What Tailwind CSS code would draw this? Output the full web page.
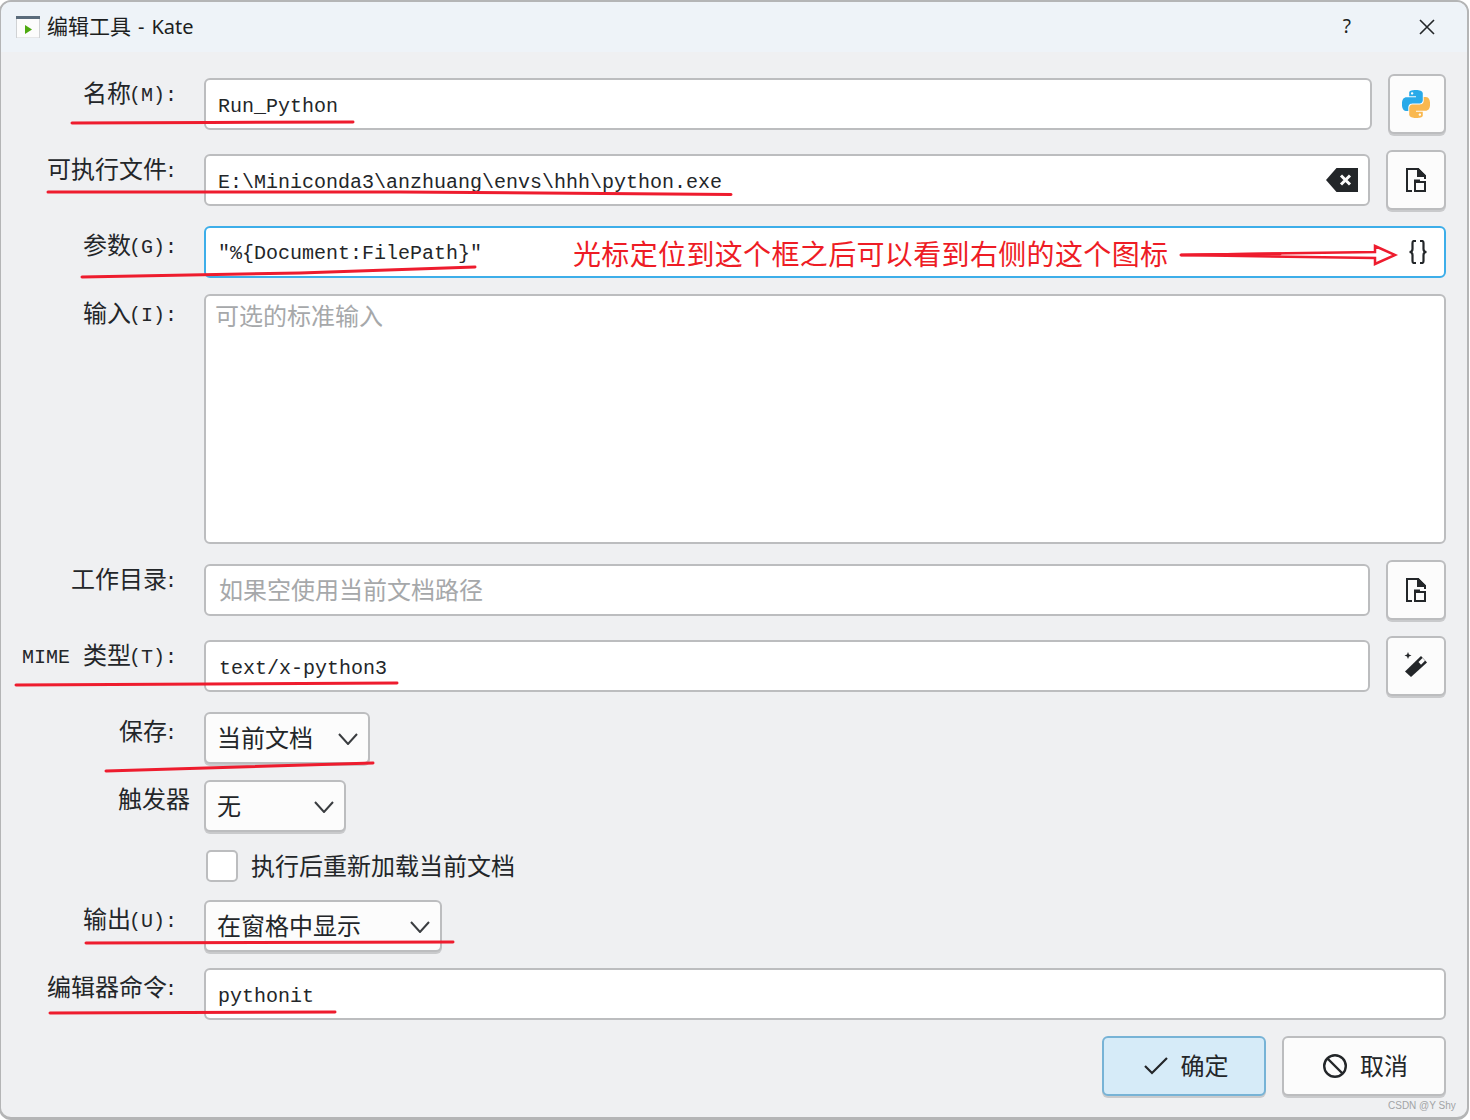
<!DOCTYPE html>
<html lang="zh-CN">

<head>
    <title>编辑工具 - Kate</title>
    <meta charset="utf-8">
    <script src="https://cdn.jsdelivr.net/npm/@tailwindcss/browser@4"></script>
</head>

<body class="bg-white">
    <div class="relative w-[1470px] h-[1120px] overflow-hidden">
        <!-- Window -->
        <div class="w-full h-full flex flex-col rounded-[12px] border-2 border-b-[3px] border-[#b4b5b6] bg-[#eff0f2] text-[#232629] text-[24px] leading-[28px] font-['Liberation_Mono','Noto_Sans_CJK_SC',monospace] overflow-hidden -mx-px">
            <!-- Title bar -->
            <div class="h-[50px] shrink-0 bg-[#eef3f8] flex items-center pl-[15px] pr-[32px] font-['Noto_Sans_CJK_SC',sans-serif] text-[21px] text-[#1c1e20]">
                <svg class="w-[24px] h-[22px] mr-[7px]" viewBox="0 0 24 22">
                    <rect x="0.5" y="2" width="23" height="20" fill="#fcfcfc" stroke="#d0d2d4" />
                    <rect x="0" y="0" width="24" height="3" fill="#5a6b7b" />
                    <path d="M9 9l7 4.500-7 4.500z" fill="#4eaa10" />
                </svg>
                <span class="-mt-[2px]">编辑工具<span class="font-['Noto_Sans',sans-serif] text-[20px] ml-[7px] mr-[7px]">-</span><span class="font-['Noto_Sans',sans-serif] text-[20px]">Kate</span></span>
                <span class="ml-auto mr-[68px] -mt-[2px] font-['Noto_Sans',sans-serif] text-[19px]">?</span>
                <svg class="w-[16px] h-[16px]" viewBox="0 0 16 16" fill="none" stroke="#232629" stroke-width="1.600">
                    <path d="M1 1l14 14M15 1L1 15" />
                </svg>
            </div>

            <!-- Form -->
            <div class="flex-1 flex flex-col gap-[16px] pt-[22px] pr-[21px]">
                <div class="flex">
                    <div class="w-[203px] h-[38px] pt-[6px] shrink-0 flex items-center justify-end pr-[27px]">名称<span class="text-[20px] -ml-[2px]">(M):</span></div>
                    <div class="flex-1 flex items-center gap-[16px]">
                        <div class="flex-1 h-[52px] bg-white border-2 border-[#bcbdbf] rounded-[6px] pl-[12px] flex items-center text-[20px] pt-[6px]">Run_Python</div>
                        <div class="w-[58px] h-[60px] bg-[#fcfcfc] border-2 border-[#bcbdbf] rounded-[6px] shadow-[0_2px_0_#c9cacc] flex items-center justify-center">
                            <svg class="w-[28px] h-[28px] -ml-[2px]" viewBox="0 0 24 24">
                                <path fill="#29aae9" d="M14.25.18l.9.2.73.26.59.3.45.32.34.34.25.34.16.33.1.3.04.26.02.2-.01.13V8.5l-.05.63-.13.55-.21.46-.26.38-.3.31-.33.25-.35.19-.35.14-.33.1-.3.07-.26.04-.21.02H8.77l-.69.05-.59.14-.5.22-.41.27-.33.32-.27.35-.2.36-.15.37-.1.35-.07.32-.04.27-.02.21v3.06H3.17l-.21-.03-.28-.07-.32-.12-.35-.18-.36-.26-.36-.36-.35-.46-.32-.59-.28-.73-.21-.88-.14-1.05-.05-1.23.06-1.22.16-1.04.24-.87.32-.71.36-.57.4-.44.42-.33.42-.24.4-.16.36-.1.32-.05.24-.01h.16l.06.01h8.16v-.83H6.18l-.01-2.75-.02-.37.05-.34.11-.31.17-.28.25-.26.31-.23.38-.2.44-.18.51-.15.58-.12.64-.1.71-.06.77-.04.84-.02 1.27.05zm-6.3 1.98l-.23.33-.08.41.08.41.23.34.33.22.41.09.41-.09.33-.22.23-.34.08-.41-.08-.41-.23-.33-.33-.22-.41-.09-.41.09z" />
                                <path fill="#f9b84f" d="M21.04 6.11l.28.06.32.12.35.18.36.27.36.35.35.47.32.59.28.73.21.88.14 1.04.05 1.23-.06 1.23-.16 1.04-.24.86-.32.71-.36.57-.4.45-.42.33-.42.24-.4.16-.36.09-.32.05-.24.02-.16-.01h-8.22v.82h5.84l.01 2.76.02.36-.05.34-.11.31-.17.29-.25.25-.31.24-.38.2-.44.17-.51.15-.58.13-.64.09-.71.07-.77.04-.84.01-1.27-.04-1.07-.14-.9-.2-.73-.25-.59-.3-.45-.33-.34-.34-.25-.34-.16-.33-.1-.3-.04-.25-.02-.2.01-.13v-5.34l.05-.64.13-.54.21-.46.26-.38.3-.32.33-.24.35-.2.35-.14.33-.1.3-.06.26-.04.21-.02.13-.01h5.84l.69-.05.59-.14.5-.21.41-.28.33-.32.27-.35.2-.36.15-.36.1-.35.07-.32.04-.28.02-.21V6.07h2.09l.14.01zm-6.47 14.25l-.23.33-.08.41.08.41.23.33.33.23.41.08.41-.08.33-.23.23-.33.08-.41-.08-.41-.23-.33-.33-.23-.41-.08-.41.08z" />
                            </svg>
                        </div>
                    </div>
                </div>

                <div class="flex">
                    <div class="w-[203px] h-[38px] pt-[6px] shrink-0 flex items-center justify-end pr-[27px]">可执行文件<span class="text-[20px] -ml-[2px]">:</span></div>
                    <div class="flex-1 flex items-center gap-[16px]">
                        <div class="flex-1 h-[52px] bg-white border-2 border-[#bcbdbf] rounded-[6px] pl-[12px] pr-[10px] flex items-center justify-between text-[20px]">
                            <span class="pt-[6px]">E:\Miniconda3\anzhuang\envs\hhh\python.exe</span>
                            <svg class="w-[32px] h-[24px]" viewBox="0 0 32 24">
                                <path d="M32 0H10.500L0 12l10.500 12H32z" fill="#232629" />
                                <path d="M15 7.500l9 9M24 7.500l-9 9" stroke="#fcfcfc" stroke-width="3" fill="none" />
                            </svg>
                        </div>
                        <div class="w-[60px] h-[60px] bg-[#fcfcfc] border-2 border-[#bcbdbf] rounded-[6px] shadow-[0_2px_0_#c9cacc] flex items-center justify-center">
                            <svg class="w-[20px] h-[24px]" viewBox="0 0 20 24" fill="none" stroke="#232629" stroke-width="2">
                                <path d="M6 23H1V1h11l7 7v3" />
                                <path d="M12 1v7h7z" fill="#232629" />
                                <path d="M9 14h10v9H9z" />
                                <path d="M8 12.500h6" />
                            </svg>
                        </div>
                    </div>
                </div>

                <div class="flex">
                    <div class="w-[203px] h-[38px] pt-[6px] shrink-0 flex items-center justify-end pr-[27px]">参数<span class="text-[20px] -ml-[2px]">(G):</span></div>
                    <div class="flex-1 h-[52px] bg-white border-2 border-[#3daee9] rounded-[6px] pl-[12px] pr-[16px] flex items-center justify-between text-[20px]">
                        <span class="pt-[4px]">"%{Document:FilePath}"</span>
                        <svg class="w-[20px] h-[24px]" viewBox="0 0 20 24" fill="none" stroke="#232629" stroke-width="2.200">
                            <path d="M8 1H6Q4.500 1 4.500 3v6q0 3-3 3 3 0 3 3v6q0 2 1.500 2h2" />
                            <path d="M12 1h2q1.500 0 1.500 2v6q0 3 3 3-3 0-3 3v6q0 2-1.500 2h-2" />
                        </svg>
                    </div>
                </div>

                <div class="flex">
                    <div class="w-[203px] h-[38px] pt-[6px] shrink-0 flex items-center justify-end pr-[27px]">输入<span class="text-[20px] -ml-[2px]">(I):</span></div>
                    <div class="flex-1 h-[250px] bg-white border-2 border-[#bcbdbf] rounded-[6px] pl-[9px] pt-[9px] text-[#a6a8aa]">可选的标准输入</div>
                </div>

                <div class="flex">
                    <div class="w-[203px] h-[38px] pt-[6px] shrink-0 flex items-center justify-end pr-[27px]">工作目录<span class="text-[20px] -ml-[2px]">:</span></div>
                    <div class="flex-1 flex items-center gap-[16px]">
                        <div class="flex-1 h-[52px] bg-white border-2 border-[#bcbdbf] rounded-[6px] pl-[13px] flex items-center text-[#a6a8aa] pt-[6px]">如果空使用当前文档路径</div>
                        <div class="w-[60px] h-[60px] bg-[#fcfcfc] border-2 border-[#bcbdbf] rounded-[6px] shadow-[0_2px_0_#c9cacc] flex items-center justify-center">
                            <svg class="w-[20px] h-[24px]" viewBox="0 0 20 24" fill="none" stroke="#232629" stroke-width="2">
                                <path d="M6 23H1V1h11l7 7v3" />
                                <path d="M12 1v7h7z" fill="#232629" />
                                <path d="M9 14h10v9H9z" />
                                <path d="M8 12.500h6" />
                            </svg>
                        </div>
                    </div>
                </div>

                <div class="flex">
                    <div class="w-[203px] h-[38px] pt-[6px] shrink-0 flex items-center justify-end pr-[27px]"><span class="text-[20px]">MIME</span><span class="w-[13px]"></span>类型<span class="text-[20px] -ml-[2px]">(T):</span></div>
                    <div class="flex-1 flex items-center gap-[16px]">
                        <div class="flex-1 h-[52px] bg-white border-2 border-[#bcbdbf] rounded-[6px] pl-[13px] flex items-center text-[20px] pt-[6px]">text/x-python3</div>
                        <div class="w-[60px] h-[60px] bg-[#fcfcfc] border-2 border-[#bcbdbf] rounded-[6px] shadow-[0_2px_0_#c9cacc] flex items-center justify-center">
                            <svg class="w-[24px] h-[26px] -mt-[5px]" viewBox="0 0 24 26">
                                <path d="M1 20.500L17 5l6 6.500L7 26z" fill="#232629" />
                                <path d="M14.500 11l4-4 2.500 2.800-4 4z" fill="#fcfcfc" />
                                <path d="M4 1l1 2.500L7.500 4.500 5 5.500 4 8 3 5.500.5 4.500 3 3.500z" fill="#232629" />
                            </svg>
                        </div>
                    </div>
                </div>

                <div class="flex">
                    <div class="w-[203px] h-[38px] pt-[6px] shrink-0 flex items-center justify-end pr-[27px]">保存<span class="text-[20px] -ml-[2px]">:</span></div>
                    <div class="w-[166px] h-[52px] bg-[#fcfcfc] border-2 border-[#bcbdbf] rounded-[6px] shadow-[0_2px_0_#c9cacc] pl-[11px] pr-[10px] flex items-center justify-between">
                        <span class="pt-[6px]">当前文档</span>
                        <svg class="w-[20px] h-[12px] mt-[2px]" viewBox="0 0 20 12" fill="none" stroke="#3a3d40" stroke-width="2"><path d="M1 1l9 10 9-10" /></svg>
                    </div>
                </div>

                <div class="flex">
                    <div class="w-[203px] h-[38px] pt-[6px] shrink-0 flex items-center justify-end pr-[14px]">触发器</div>
                    <div class="w-[142px] h-[52px] bg-[#fcfcfc] border-2 border-[#bcbdbf] rounded-[6px] shadow-[0_2px_0_#c9cacc] pl-[11px] pr-[10px] flex items-center justify-between">
                        <span class="pt-[6px]">无</span>
                        <svg class="w-[20px] h-[12px] mt-[2px]" viewBox="0 0 20 12" fill="none" stroke="#3a3d40" stroke-width="2"><path d="M1 1l9 10 9-10" /></svg>
                    </div>
                </div>

                <div class="flex items-center h-[36px] pl-[205px]">
                    <div class="w-[32px] h-[32px] bg-white border-2 border-[#bcbdbf] rounded-[5px] mr-[13px]"></div>
                    <span class="pt-[6px]">执行后重新加载当前文档</span>
                </div>

                <div class="flex">
                    <div class="w-[203px] h-[38px] pt-[6px] shrink-0 flex items-center justify-end pr-[27px]">输出<span class="text-[20px] -ml-[2px]">(U):</span></div>
                    <div class="w-[238px] h-[52px] bg-[#fcfcfc] border-2 border-[#bcbdbf] rounded-[6px] shadow-[0_2px_0_#c9cacc] pl-[11px] pr-[10px] flex items-center justify-between">
                        <span class="pt-[6px]">在窗格中显示</span>
                        <svg class="w-[20px] h-[12px] mt-[2px]" viewBox="0 0 20 12" fill="none" stroke="#3a3d40" stroke-width="2"><path d="M1 1l9 10 9-10" /></svg>
                    </div>
                </div>

                <div class="flex">
                    <div class="w-[203px] h-[38px] pt-[6px] shrink-0 flex items-center justify-end pr-[27px]">编辑器命令<span class="text-[20px] -ml-[2px]">:</span></div>
                    <div class="flex-1 h-[52px] bg-white border-2 border-[#bcbdbf] rounded-[6px] pl-[12px] flex items-center text-[20px] pt-[6px]">pythonit</div>
                </div>

                <!-- Buttons -->
                <div class="flex justify-end gap-[16px]">
                    <div class="w-[164px] h-[60px] bg-[#d6ebf8] border-2 border-[#77b3d6] rounded-[6px] shadow-[0_2px_0_#c9cacc] flex items-center justify-center gap-[13px] pl-[4px]">
                        <svg class="w-[24px] h-[18px]" viewBox="0 0 24 18" fill="none" stroke="#232629" stroke-width="2.200"><path d="M1 9l7 7L23 1" /></svg>
                        <span class="pt-[6px]">确定</span>
                    </div>
                    <div class="w-[164px] h-[60px] bg-[#fcfcfc] border-2 border-[#bcbdbf] rounded-[6px] shadow-[0_2px_0_#c9cacc] flex items-center justify-center gap-[13px] pl-[3px]">
                        <svg class="w-[24px] h-[24px]" viewBox="0 0 24 24" fill="none" stroke="#232629" stroke-width="2.400"><circle cx="12" cy="12" r="10.800" /><path d="M4.500 4.500l15 15" /></svg>
                        <span class="pt-[6px]">取消</span>
                    </div>
                </div>
            </div>
        </div>

        <!-- Red annotations on top of the dialog -->
        <svg class="absolute left-0 top-0 w-[1470px] h-[1120px] pointer-events-none" viewBox="0 0 1470 1120" fill="none" stroke="#ee1c2e" stroke-width="3" stroke-linecap="round">
            <path d="M72 123L210 122.500 353 122" />
            <path d="M48 192L400 192 731 194.500" />
            <path d="M82 277L300 273 475 267" />
            <path d="M16 685L397 683" />
            <path d="M106 771L373 763" />
            <path d="M86 943L453 942" />
            <path d="M50 1013L335 1012" />
            <path d="M1181 255L1375 252V246L1395 255 1375 264V258z" fill="#fff" stroke-width="2.500" />
            <path d="M1181 255L1280 254" stroke-width="3" />
        </svg>
        <div class="absolute left-[573px] top-[233px] text-[28px] leading-[40px] text-[#ee1c25] font-['Noto_Sans_CJK_SC',sans-serif] whitespace-nowrap tracking-[0.35px]">光标定位到这个框之后可以看到右侧的这个图标</div>
        <div class="absolute left-[1388px] top-[1099px] text-[10px] leading-[14px] text-[#a2a4a6] font-['Liberation_Sans',sans-serif]">CSDN @Y Shy</div>
    </div>
</body>

</html>
